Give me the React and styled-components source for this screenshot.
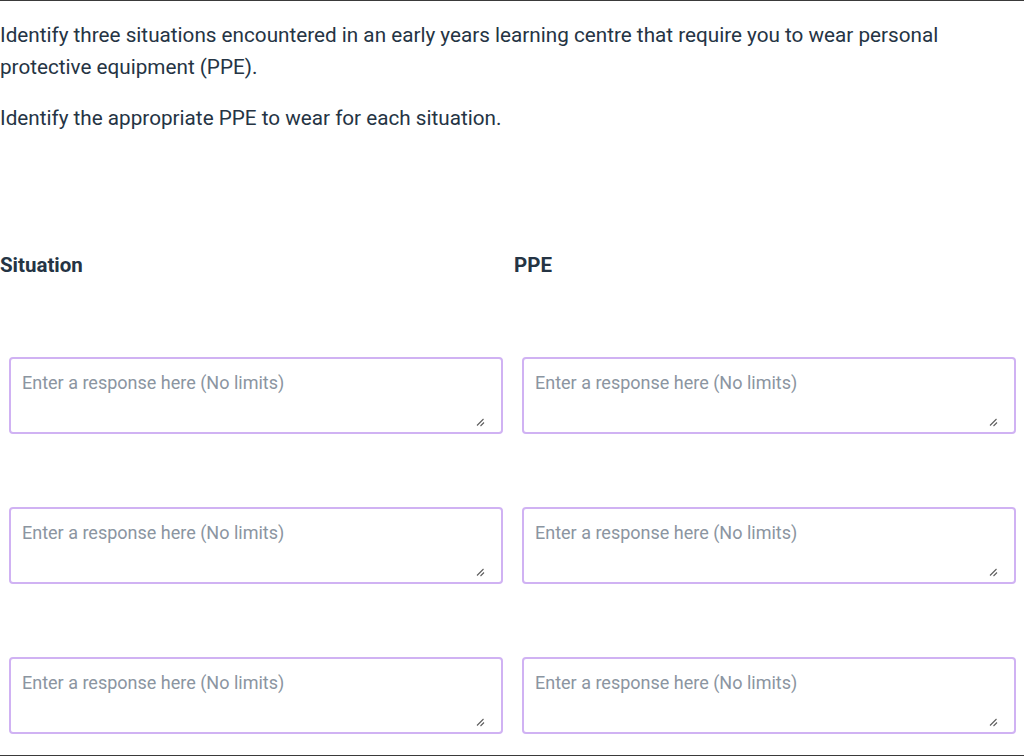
import React from 'react';
import styled, { createGlobalStyle } from 'styled-components';

const GlobalStyle = createGlobalStyle`
  html, body {
    margin: 0;
    padding: 0;
    background: #ffffff;
  }
  body {
    font-family: Roboto, "Liberation Sans", sans-serif;
    color: #253444;
  }
`;

const Frame = styled.div`
  box-sizing: border-box;
  width: 1024px;
  height: 756px;
  border-top: 1px solid #3a3a3a;
  border-bottom: 1px solid #3a3a3a;
  padding-top: 18px;
  overflow: hidden;
`;

const Prompt = styled.p`
  margin: 0 0 19px;
  font-size: 20.7px;
  line-height: 32px;
  color: #253444;
`;

const Table = styled.div`
  display: grid;
  grid-template-columns: 512px 512px;
  margin-top: 115px;
`;

const Heading = styled.div`
  font-size: 20.5px;
  font-weight: 700;
  line-height: 32px;
  color: #253444;
  padding-left: ${({ $col }) => ($col === 1 ? '0' : '2px')};
  margin-bottom: 76px;
`;

const Cell = styled.div`
  padding: 0 ${({ $col }) => ($col === 1 ? '9px 73px 9px' : '8px 73px 10px')};
`;

const Field = styled.div`
  position: relative;
`;

const Answer = styled.textarea`
  display: block;
  box-sizing: border-box;
  width: 100%;
  height: 77px;
  margin: 0;
  padding: 12px 11px;
  border: 2px solid #d0b2f3;
  border-radius: 4px;
  font-family: Roboto, "Liberation Sans", sans-serif;
  font-size: 18px;
  line-height: 24px;
  color: #253444;
  background: #ffffff;
  outline: none;
  resize: none;

  &::placeholder {
    color: #8b95a1;
  }
`;

const Grip = styled.svg`
  position: absolute;
  right: 17px;
  bottom: 7px;
  width: 11px;
  height: 11px;
  pointer-events: none;
`;

const ResizeGrip = () => (
  <Grip viewBox="0 0 11 11">
    <path d="M2 9.5 L8.5 3 M5.5 10 L9 6.5" stroke="#5f5f5f" strokeWidth="1.1" fill="none" />
  </Grip>
);

const rows = [0, 1, 2];

export default function App() {
  return (
    <>
      <GlobalStyle />
      <Frame>
        <Prompt>
          Identify three situations encountered in an early years learning centre that require you to wear personal
          protective equipment (PPE).
        </Prompt>
        <Prompt>Identify the appropriate PPE to wear for each situation.</Prompt>
        <Table>
          <Heading $col={1}>Situation</Heading>
          <Heading $col={2}>PPE</Heading>
          {rows.map((r) => (
            <React.Fragment key={r}>
              <Cell $col={1}>
                <Field>
                  <Answer placeholder="Enter a response here (No limits)" />
                  <ResizeGrip />
                </Field>
              </Cell>
              <Cell $col={2}>
                <Field>
                  <Answer placeholder="Enter a response here (No limits)" />
                  <ResizeGrip />
                </Field>
              </Cell>
            </React.Fragment>
          ))}
        </Table>
      </Frame>
    </>
  );
}
